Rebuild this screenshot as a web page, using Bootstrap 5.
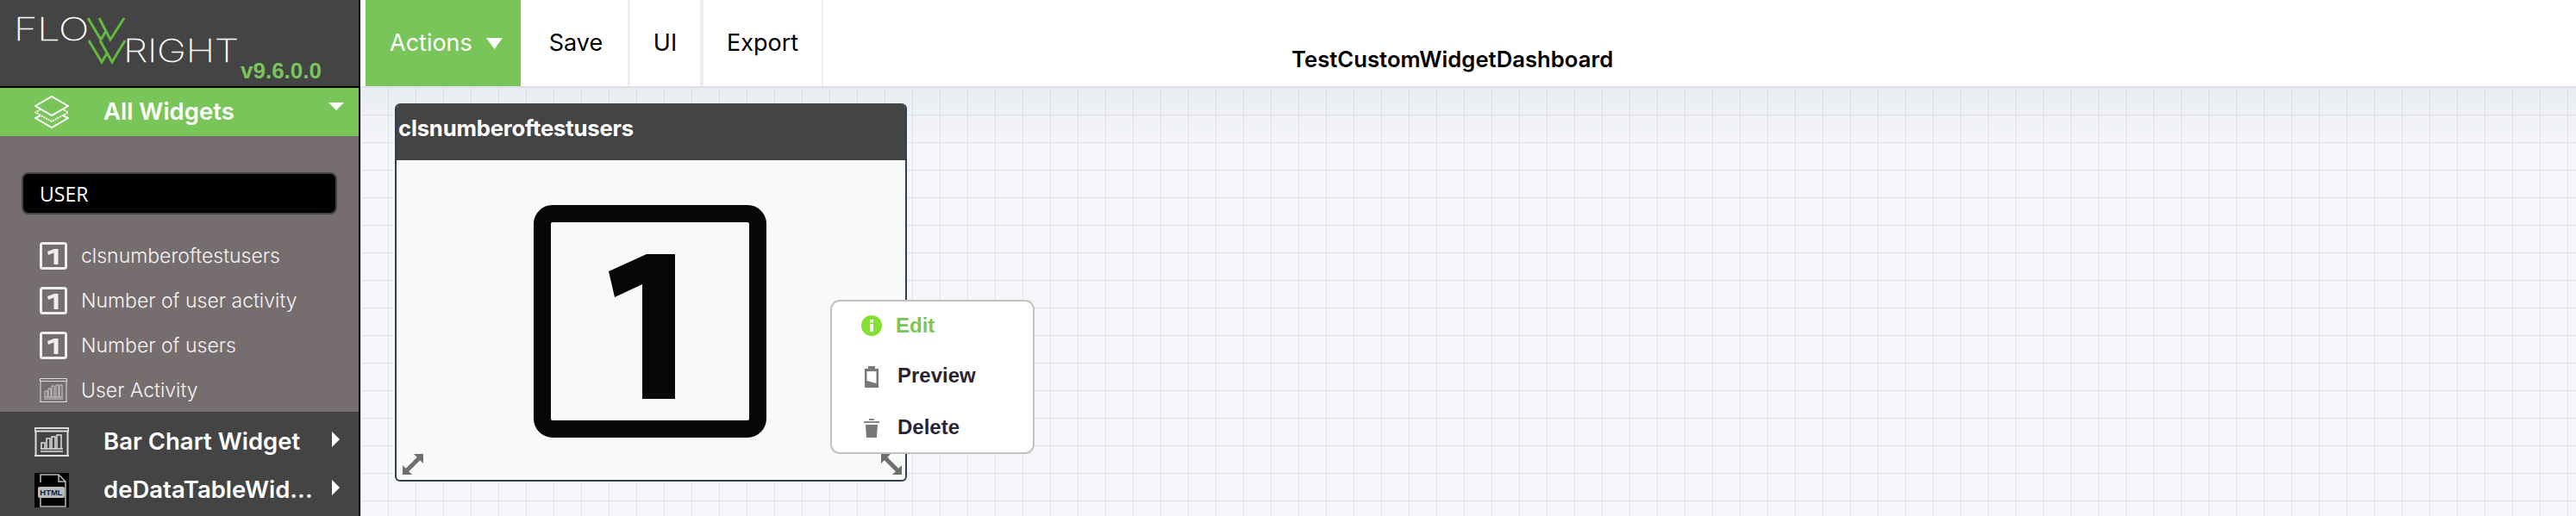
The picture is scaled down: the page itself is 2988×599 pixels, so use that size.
<!DOCTYPE html>
<html lang="en">
<head>
<meta charset="utf-8">
<title>FlowWright</title>
<link href="https://cdn.jsdelivr.net/npm/bootstrap@5.3.0/dist/css/bootstrap.min.css" rel="stylesheet">
<style>
html,body{height:100%;overflow:hidden}
body{font-family:"Inter","Liberation Sans",sans-serif;background:#fff}
.fw-side{width:418px;flex:none;background:#444;border-right:2px solid #000;height:599px;overflow:hidden}
.fw-logo{height:100px;background:#444}
.fw-ver{font:700 26px/1 "Liberation Sans",sans-serif;color:#7ac55a;margin-left:279px;padding-top:69px}
.fw-sep{height:2px;background:#000}
.fw-head{height:56px;color:#fff;font-weight:600;font-size:27.5px;padding-left:40px}
.fw-head svg.fw-hi{width:40px;flex:none;margin-right:40px}
.fw-green{background:#7ac55a}
.fw-tri{margin-left:auto;flex:none}
.fw-panel{height:320px;background:#766d6e;padding:42px 25px 0}
.fw-search{display:block;width:366px;height:49px;background:#000;border:2px solid #444;border-radius:8px;color:#fff;font:400 23px "Open Sans",sans-serif;padding:0 19px}
.fw-item{height:52px;padding-left:21px;color:#f4f2f2;font-size:23px;font-weight:300}
.fw-item svg{width:32px;height:32px;flex:none;margin-right:16px}
.fw-list{margin-top:22px}
.fw-first{height:63px;padding-top:7px}
.fw-main{min-width:0;height:599px}
.fw-bar{height:100px;background:#fff}
.fw-tab{color:#000;font-size:27px;height:100px;background:#fff}
.fw-act{background:#7ac55a;color:#fff;margin-left:6px;margin-right:4px;width:180px;padding-left:28px}
.fw-sv{width:123px;border-right:3px solid #ebeef5}
.fw-ui{width:85px;border-right:4px solid #ebeef5}
.fw-ex{width:139px;border-right:2px solid #ebeef5}
.fw-title{font-size:25.7px;font-weight:600;color:#000;margin-left:543px;padding-top:38px;line-height:62px;white-space:nowrap}
.fw-canvas{position:relative;flex:1;padding:19px 0 0 40px;border-top:1px solid #e1e3e6;
 background-color:#f5f7fb;
 background-image:linear-gradient(to bottom,rgba(190,195,210,.2),rgba(190,195,210,0) 70px),
  linear-gradient(#e0e2e6 1px,transparent 1px),linear-gradient(90deg,#e0e2e6 1px,transparent 1px),
  linear-gradient(#f0f2f6 1px,transparent 1px),linear-gradient(90deg,#f0f2f6 1px,transparent 1px);
 background-size:100% 100%,32px 32px,32px 32px,8px 8px,8px 8px}
.fw-widget{width:594px;height:439px;background:#f9f9f9;border:2px solid #2f4054;border-top:0;border-radius:6px;overflow:hidden}
.fw-whead{height:66px;background:#444;margin:0 -2px;color:#fff;font-size:25.7px;font-weight:700;padding:0 0 8px 4px;letter-spacing:-.2px}
.fw-wbody{height:371px;position:relative}
.fw-num{display:block;position:absolute;left:159px;top:52px;width:270px;height:270px}
.fw-rs{position:absolute;width:26px;height:26px;bottom:5px}
.fw-menu{position:absolute;left:545px;top:247px;width:237px;height:179px;background:#fff;border:2px solid #c2c2c2;border-radius:11px;font:700 24px "Liberation Sans",sans-serif;color:#2c2433}
.fw-mi{height:60px}
.fw-mi svg{width:28px;height:28px;flex:none;margin-left:32px;margin-right:14px}
.fw-mi.fw-on{color:#7ac55a;height:56px}
.fw-gap{margin-left:2px}
</style>
</head>
<body>
<div class="d-flex">
  <aside class="fw-side">
    <div class="fw-logo position-relative">
      <svg class="position-absolute top-0 start-0" width="290" height="80" viewBox="0 0 290 80">
        <g font-family="Inter,Lato,sans-serif" font-weight="100" font-size="36" fill="#fff" stroke="#fff" stroke-width=".7">
          <text x="16" y="47" textLength="87" lengthAdjust="spacingAndGlyphs">FLO</text>
          <text x="143" y="72" textLength="134" lengthAdjust="spacingAndGlyphs">RIGHT</text>
        </g>
        <g fill="none" stroke="#62bb3f" stroke-width="3">
          <polyline points="102,21 117,46 123,36"/>
          <polyline points="115,21 128,46 144,21"/>
          <polyline points="103,47 118,72 124,62"/>
          <polyline points="116,47 130,72 145,47"/>
        </g>
      </svg>
      <div class="fw-ver">v9.6.0.0</div>
    </div>
    <div class="fw-sep"></div>
    <div class="fw-head fw-green d-flex align-items-center">
      <svg class="fw-hi" height="40" viewBox="0 0 40 40" fill="none" stroke="#fff" stroke-width="2">
        <path d="M20 2 39 13 20 24 1 13Z"/>
        <path d="M7 17 1 20.500 20 31 39 20.500 33 17" stroke-dasharray="2 1"/>
        <path d="M7 24 1 27 20 38 39 27 33 24"/>
      </svg>
      <span>All Widgets</span>
      <svg class="fw-tri" style="margin-right:17px;margin-top:-14px" width="18" height="9" viewBox="0 0 18 9"><path d="M0 0H18L9 9Z" fill="#fff"/></svg>
    </div>
    <div class="fw-panel">
      <input class="fw-search" type="text" value="USER" aria-label="Search widgets">
      <div class="fw-list">
        <div class="fw-item d-flex align-items-center"><svg viewBox="0 0 32 32"><rect x="1.500" y="1.500" width="29" height="29" rx="2" fill="none" stroke="#eee" stroke-width="3"/><path d="M9 11l8-3h4.500v18H16.500V12.500l-6.500 2.500z" fill="#eee"/></svg><span>clsnumberoftestusers</span></div>
        <div class="fw-item d-flex align-items-center"><svg viewBox="0 0 32 32"><rect x="1.500" y="1.500" width="29" height="29" rx="2" fill="none" stroke="#eee" stroke-width="3"/><path d="M9 11l8-3h4.500v18H16.500V12.500l-6.500 2.500z" fill="#eee"/></svg><span>Number of user activity</span></div>
        <div class="fw-item d-flex align-items-center"><svg viewBox="0 0 32 32"><rect x="1.500" y="1.500" width="29" height="29" rx="2" fill="none" stroke="#eee" stroke-width="3"/><path d="M9 11l8-3h4.500v18H16.500V12.500l-6.500 2.500z" fill="#eee"/></svg><span>Number of users</span></div>
        <div class="fw-item d-flex align-items-center"><svg viewBox="0 0 32 28" preserveAspectRatio="none" style="height:28px"><path d="M.5 .5h31v3H.5zM1 3.500V27M31 3.500V27M0 27.500h32" fill="none" stroke="#ddd" stroke-width="1"/><path d="M5 22h22M5 24h22M6 22v-7h3v7M10 22V12h3v10M14 22V9h3v13M19 22V8h3v14M23 22V8h3v14" fill="none" stroke="#ccc" stroke-width="1"/></svg><span>User Activity</span></div>
      </div>
    </div>
    <div class="fw-head fw-first d-flex align-items-center">
      <svg class="fw-hi" height="34" viewBox="0 0 40 34"><path d="M.5 1h39v3.500H.5zM1.500 4.500V33M38.500 4.500V33M0 33h40" fill="none" stroke="#ddd" stroke-width="2"/><path d="M7 25h26M7 28h26M8 25v-7h4v7M14 25V13h4v12M20 25V11h4v14M26 25V9h5v16" fill="none" stroke="#ddd" stroke-width="1.500"/></svg>
      <span>Bar Chart Widget</span>
      <svg class="fw-tri" style="margin-right:22px;margin-top:-6px" width="9" height="18" viewBox="0 0 9 18"><path d="M0 0V18L9 9Z" fill="#fff"/></svg>
    </div>
    <div class="fw-head d-flex align-items-center">
      <svg class="fw-hi" height="40" viewBox="0 0 40 40"><rect width="40" height="40" fill="#000"/><path d="M7 11V2H28L36 10V39H7V29" fill="none" stroke="#bbb" stroke-width="1.500"/><path d="M28 2V10H36" fill="none" stroke="#bbb" stroke-width="1.500"/><rect x="4" y="16" width="31" height="13" rx="2" fill="#bbb"/><text x="19.500" y="26" font-family="Liberation Sans,sans-serif" font-weight="700" font-size="9.500" text-anchor="middle" fill="#222">HTML</text></svg>
      <span class="text-nowrap">deDataTableWid...</span>
      <svg class="fw-tri" style="margin-right:22px;margin-top:-6px" width="9" height="18" viewBox="0 0 9 18"><path d="M0 0V18L9 9Z" fill="#fff"/></svg>
    </div>
  </aside>
  <main class="fw-main flex-grow-1 d-flex flex-column">
    <div class="fw-bar d-flex">
      <div class="fw-tab fw-act d-flex align-items-center">Actions<svg class="ms-3" width="19" height="13" viewBox="0 0 19 13"><path d="M0 0H19L9.500 13Z" fill="#fff"/></svg></div>
      <div class="fw-tab fw-sv d-flex align-items-center justify-content-center">Save</div>
      <div class="fw-tab fw-ui d-flex align-items-center justify-content-center">UI</div>
      <div class="fw-tab fw-ex d-flex align-items-center justify-content-center">Export</div>
      <div class="fw-title">TestCustomWidgetDashboard</div>
    </div>
    <div class="fw-canvas">
      <div class="fw-widget">
        <div class="fw-whead d-flex align-items-center">clsnumberoftestusers</div>
        <div class="fw-wbody">
          <svg class="fw-num" viewBox="0 0 270 270"><rect x="10" y="10" width="250" height="250" rx="12" fill="none" stroke="#060709" stroke-width="20"/><path d="M87 77 131 57H164V225H126V92L94 107Z" fill="#060709"/></svg>
          <svg class="fw-rs" style="left:6px" viewBox="0 0 26 26"><path d="M6 20 20 6" stroke="#6f6f6f" stroke-width="5"/><path d="M1 25V14L12 25ZM25 1V12L14 1Z" fill="#6f6f6f"/></svg>
          <svg class="fw-rs" style="right:3px" viewBox="0 0 26 26"><path d="M6 6 20 20" stroke="#6f6f6f" stroke-width="5"/><path d="M1 1V12L12 1ZM25 25V14L14 25Z" fill="#6f6f6f"/></svg>
        </div>
      </div>
      <div class="fw-menu">
        <div class="fw-mi fw-on d-flex align-items-center"><svg viewBox="0 0 28 28"><circle cx="14" cy="14" r="12" fill="#85e035"/><rect x="12" y="12" width="4" height="9" fill="#fff"/><rect x="12" y="7" width="4" height="3.500" fill="#fff"/></svg><span>Edit</span></div>
        <div class="fw-mi d-flex align-items-center"><svg viewBox="0 0 28 28"><path d="M6 6h4V3h8v3h4v22H6z" fill="#77777c"/><path d="M8.500 9h11v14l-11-3z" fill="#fff"/></svg><span class="fw-gap">Preview</span></div>
        <div class="fw-mi d-flex align-items-center"><svg viewBox="0 0 28 28"><path d="M5 7h18v2H5zM11 4h6v2h-6z" fill="#888"/><path d="M7 11h14l-1 15H8z" fill="#777"/></svg><span class="fw-gap">Delete</span></div>
      </div>
    </div>
  </main>
</div>
<script src="https://cdn.jsdelivr.net/npm/bootstrap@5.3.0/dist/js/bootstrap.bundle.min.js"></script>
</body>
</html>
